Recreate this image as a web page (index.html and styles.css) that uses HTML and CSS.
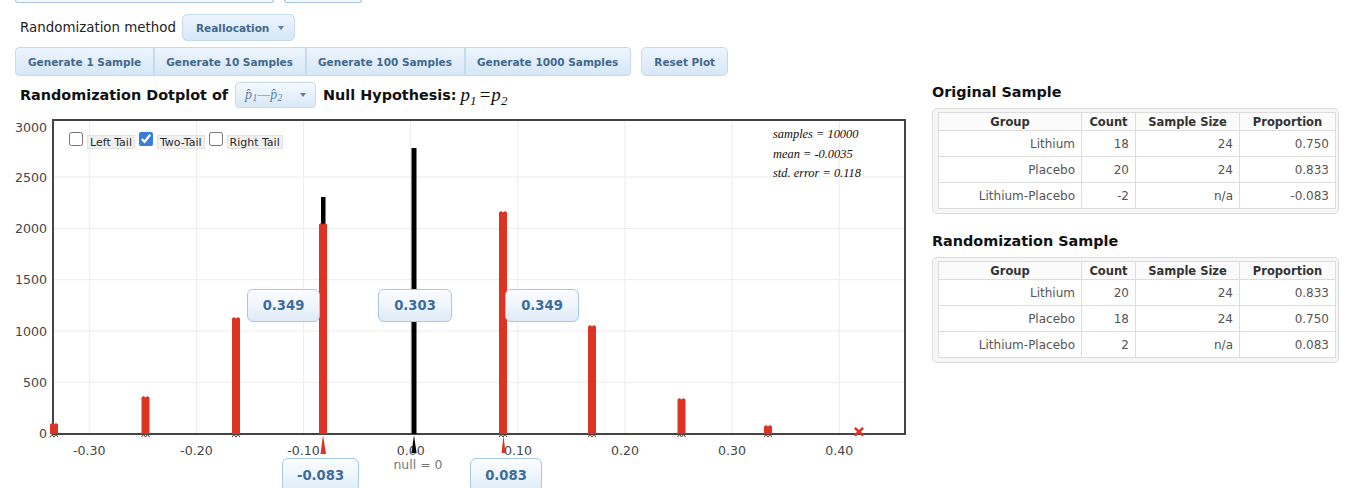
FILE: index.html
```html
<!DOCTYPE html>
<html>
<head>
<meta charset="utf-8">
<link rel="stylesheet" href="styles.css">
</head>
<body>
<div class="page">
  <div class="left">
    <div class="stub-row"><div class="stub stub-a"></div><div class="stub stub-b"></div></div>
    <div class="method-row">
      <span class="method-label">Randomization method</span>
      <button class="btn select-btn">Reallocation<span class="caret"></span></button>
    </div>
    <div class="btn-row">
      <div class="btnset">
        <button class="btn">Generate 1 Sample</button>
        <button class="btn">Generate 10 Samples</button>
        <button class="btn">Generate 100 Samples</button>
        <button class="btn">Generate 1000 Samples</button>
      </div>
      <button class="btn single">Reset Plot</button>
    </div>
    <div class="title-row">
      <span class="title">Randomization Dotplot of</span>
      <button class="stat-select"><span class="math">p̂<sub>1</sub>—p̂<sub>2</sub></span><span class="caret"></span></button>
      <span class="title">Null Hypothesis:</span>
      <span class="hyp">p<sub>1</sub>=p<sub>2</sub></span>
    </div>
    <div class="plot">
      <svg class="chart" width="915" height="372" viewBox="0 116 915 372" xmlns="http://www.w3.org/2000/svg">
        <g stroke="#ececec" stroke-width="1">
          <line x1="54" y1="177" x2="904" y2="177"/>
          <line x1="54" y1="228.4" x2="904" y2="228.4"/>
          <line x1="54" y1="279.7" x2="904" y2="279.7"/>
          <line x1="54" y1="331" x2="904" y2="331"/>
          <line x1="54" y1="382.4" x2="904" y2="382.4"/>
          <line x1="89.3" y1="121" x2="89.3" y2="433"/>
          <line x1="196.4" y1="121" x2="196.4" y2="433"/>
          <line x1="303.6" y1="121" x2="303.6" y2="433"/>
          <line x1="410.7" y1="121" x2="410.7" y2="433"/>
          <line x1="517.9" y1="121" x2="517.9" y2="433"/>
          <line x1="625" y1="121" x2="625" y2="433"/>
          <line x1="732.1" y1="121" x2="732.1" y2="433"/>
          <line x1="839.3" y1="121" x2="839.3" y2="433"/>
        </g>
        <rect x="53" y="120" width="852" height="314" fill="none" stroke="#444" stroke-width="2"/>
        <g class="ylab" text-anchor="end">
          <text x="47" y="127">3000</text>
          <text x="47" y="177">2500</text>
          <text x="47" y="228.4">2000</text>
          <text x="47" y="279.7">1500</text>
          <text x="47" y="331">1000</text>
          <text x="47" y="382.4">500</text>
          <text x="47" y="433">0</text>
        </g>
        <g class="xlab" text-anchor="middle">
          <text x="89.3" y="450">-0.30</text>
          <text x="196.4" y="450">-0.20</text>
          <text x="303.6" y="450">-0.10</text>
          <text x="410.7" y="450">0.00</text>
          <text x="517.9" y="450">0.10</text>
          <text x="625" y="450">0.20</text>
          <text x="732.1" y="450">0.30</text>
          <text x="839.3" y="450">0.40</text>
        </g>
        <text class="nulllab" x="418" y="464" text-anchor="middle">null = 0</text>
        <rect x="321" y="197" width="4.5" height="237" fill="#000"/>
        <rect x="411.5" y="148" width="5" height="286" fill="#000"/>
        <g fill="#dc3322">
          <path d="M50 424.5 l2 -1.5 l2 1.5 l2 -1.5 l2 1.5 V434 H50 Z"/>
          <path d="M141.5 397.5 l2 -1.5 l2 1.5 l2 -1.5 l2 1.5 V434 H141.5 Z"/>
          <path d="M232 318.5 l2 -1.5 l2 1.5 l2 -1.5 l2 1.5 V434 H232 Z"/>
          <path d="M319 224.5 l2 -1.5 l2 1.5 l2 -1.5 l2 1.5 V434 H319 Z"/>
          <path d="M499 212.5 l2 -1.5 l2 1.5 l2 -1.5 l2 1.5 V434 H499 Z"/>
          <path d="M588 326.5 l2 -1.5 l2 1.5 l2 -1.5 l2 1.5 V434 H588 Z"/>
          <path d="M677.5 399.5 l2 -1.5 l2 1.5 l2 -1.5 l2 1.5 V434 H677.5 Z"/>
          <path d="M764 426.5 l2 -1.5 l2 1.5 l2 -1.5 l2 1.5 V434 H764 Z"/>
        </g>
        <g stroke="#dc3322" stroke-width="2.4" stroke-linecap="round">
          <line x1="855.5" y1="428.5" x2="862.5" y2="435"/>
          <line x1="862.5" y1="428.5" x2="855.5" y2="435"/>
        </g>
        <g stroke="#5a2a22" stroke-width="1" fill="none">
          <path d="M50 437 l2 -2.5 l2 2.5 l2 -2.5 l2 2.5"/>
          <path d="M141.5 437 l2 -2.5 l2 2.5 l2 -2.5 l2 2.5"/>
          <path d="M232 437 l2 -2.5 l2 2.5 l2 -2.5 l2 2.5"/>
          <path d="M499 437 l2 -2.5 l2 2.5 l2 -2.5 l2 2.5"/>
          <path d="M588 437 l2 -2.5 l2 2.5 l2 -2.5 l2 2.5"/>
          <path d="M677.5 437 l2 -2.5 l2 2.5 l2 -2.5 l2 2.5"/>
          <path d="M764 437 l2 -2.5 l2 2.5 l2 -2.5 l2 2.5"/>
        </g>
        <polygon points="323,435 320.5,454 326,454" fill="#dc3322"/>
        <polygon points="503.5,435 501.5,453 505.5,453" fill="#dc3322"/>
        <polygon points="414,435 411.5,453 416.5,453" fill="#000"/>
      </svg>

      <div class="tails">
        <input type="checkbox" class="cb"><span class="tail-label">Left Tail</span>
        <input type="checkbox" class="cb" checked><span class="tail-label">Two-Tail</span>
        <input type="checkbox" class="cb"><span class="tail-label">Right Tail</span>
      </div>

      <div class="stats">
        <div>samples = 10000</div>
        <div>mean = -0.0035</div>
        <div>std. error = 0.118</div>
      </div>

      <div class="pbox v1">0.349</div>
      <div class="pbox v2">0.303</div>
      <div class="pbox v3">0.349</div>
      <div class="pbox v4">-0.083</div>
      <div class="pbox v5">0.083</div>
    </div>
  </div>

  <div class="right">
    <div class="sec-title first">Original Sample</div>
    <div class="panel">
      <table class="tbl">
        <tr><th class="c1">Group</th><th class="c2">Count</th><th class="c3">Sample Size</th><th class="c4">Proportion</th></tr>
        <tr><td>Lithium</td><td>18</td><td>24</td><td>0.750</td></tr>
        <tr><td>Placebo</td><td>20</td><td>24</td><td>0.833</td></tr>
        <tr><td>Lithium-Placebo</td><td>-2</td><td>n/a</td><td>-0.083</td></tr>
      </table>
    </div>
    <div class="sec-title second">Randomization Sample</div>
    <div class="panel">
      <table class="tbl">
        <tr><th class="c1">Group</th><th class="c2">Count</th><th class="c3">Sample Size</th><th class="c4">Proportion</th></tr>
        <tr><td>Lithium</td><td>20</td><td>24</td><td>0.833</td></tr>
        <tr><td>Placebo</td><td>18</td><td>24</td><td>0.750</td></tr>
        <tr><td>Lithium-Placebo</td><td>2</td><td>n/a</td><td>0.083</td></tr>
      </table>
    </div>
  </div>
</div>
</body>
</html>
```

FILE: styles.css
```css
* { box-sizing: border-box; }
html, body { margin: 0; padding: 0; background: #fff; }
body {
  font-family: "DejaVu Sans", Verdana, sans-serif;
  color: #222;
  width: 1363px;
  height: 488px;
  overflow: hidden;
}
.page { display: flex; }
.left { width: 925px; flex: none; }
.right { width: 420px; padding-left: 6px; flex: none; }

.stub-row { display: flex; height: 3px; }
.stub {
  height: 3px;
  border: 1px solid #a9c3dc;
  border-top: none;
  border-radius: 0 0 4px 4px;
  background: #f3f8fd;
}
.stub-a { margin-left: 15px; width: 259px; }
.stub-b { margin-left: 10px; width: 78px; }

.method-row {
  display: flex;
  align-items: center;
  gap: 6px;
  margin-top: 11px;
  padding-left: 20px;
  height: 27px;
}
.method-label { font-size: 13.4px; color: #222; }

.btn {
  font-family: "DejaVu Sans", Verdana, sans-serif;
  font-weight: bold;
  font-size: 10.5px;
  color: #41698f;
  height: 29px;
  padding: 0 12px;
  margin: 0;
  border: 1px solid #c5dbec;
  background: linear-gradient(#edf5fd 0%, #e2eefa 50%, #d6e7f7 100%);
  display: inline-flex;
  align-items: center;
  white-space: nowrap;
}
.select-btn {
  height: 27px;
  padding: 0 10px 0 13px;
  border-radius: 5px;
  gap: 9px;
}
.caret {
  display: inline-block;
  width: 0; height: 0;
  border-left: 3.5px solid transparent;
  border-right: 3.5px solid transparent;
  border-top: 4px solid #5b7fa6;
}

.btn-row {
  display: flex;
  gap: 10px;
  margin-top: 6px;
  padding-left: 15px;
}
.btnset { display: flex; }
.btnset .btn + .btn { border-left: none; }
.btnset .btn:first-child { border-radius: 4px 0 0 4px; }
.btnset .btn:last-child { border-radius: 0 4px 4px 0; }
.btnset .btn + .btn { box-shadow: inset 1px 0 0 #c5dbec; }
.single { border-radius: 5px; }

.title-row {
  display: flex;
  align-items: center;
  margin-top: 6px;
  padding-left: 20px;
  height: 26px;
}
.title { font-weight: bold; font-size: 14.4px; color: #111; }
.stat-select {
  margin: 0 7px 0 7px;
  height: 26px;
  width: 81px;
  border: 1px solid #c5dbec;
  border-radius: 4px;
  background: linear-gradient(#f4f9fe 0%, #e4effa 60%, #d9e8f6 100%);
  display: inline-flex;
  align-items: center;
  justify-content: space-between;
  padding: 0 9px 0 9px;
}
.math {
  font-family: "Liberation Serif", serif;
  font-style: italic;
  font-size: 14px;
  color: #5a82ac;
  letter-spacing: 0.3px;
}
.math sub { font-size: 9.5px; vertical-align: -2px; line-height: 0; }
.hyp {
  margin-left: 4px;
  font-family: "Liberation Serif", serif;
  font-style: italic;
  font-size: 19px;
  color: #111;
}
.hyp sub { font-size: 13px; vertical-align: -4px; line-height: 0; margin-right: 2px; }

.plot {
  position: relative;
  margin-top: 8px;
  width: 915px;
  height: 372px;
}
.chart { display: block; }
.ylab text, .xlab text {
  font-family: "DejaVu Sans", Verdana, sans-serif;
  font-size: 12.6px;
  fill: #444;
  dominant-baseline: central;
}
.nulllab {
  font-family: "DejaVu Sans", Verdana, sans-serif;
  font-size: 12.5px;
  fill: #777;
  dominant-baseline: central;
}

.tails {
  position: absolute;
  left: 69px;
  top: 16px;
  display: flex;
  align-items: flex-start;
}
.cb {
  width: 14px;
  height: 14px;
  margin: 0;
  accent-color: #3b7bdc;
}
.tail-label {
  margin: 3px 4px 0 4px;
  height: 14px;
  line-height: 13px;
  padding: 0 2px;
  font-size: 11px;
  color: #2a2a2a;
  background: #f0f0f0;
  border: 1px solid #e2e2e2;
}

.stats {
  position: absolute;
  left: 773px;
  top: 9px;
  font-family: "Liberation Serif", serif;
  font-style: italic;
  font-size: 12.4px;
  line-height: 19.5px;
  color: #111;
}

.pbox {
  position: absolute;
  height: 33px;
  border: 1px solid #a6c9e2;
  border-radius: 6px;
  background: linear-gradient(#fbfdff 0%, #eef5fc 50%, #dfebf7 100%);
  color: #3d6d9c;
  font-weight: bold;
  font-size: 13.2px;
  display: flex;
  align-items: center;
  justify-content: center;
}
.v1 { left: 247px; top: 173px; width: 73px; }
.v2 { left: 378px; top: 173px; width: 74px; }
.v3 { left: 505px; top: 173px; width: 74px; }
.v4 { left: 282px; top: 342px; width: 77px; height: 34px; }
.v5 { left: 470px; top: 342px; width: 72px; height: 34px; }

.sec-title {
  font-weight: bold;
  font-size: 14.4px;
  line-height: 20px;
  color: #111;
  padding-left: 1px;
}
.sec-title.first { margin-top: 82px; }
.sec-title.second { margin-top: 17px; }
.panel {
  margin-top: 6px;
  margin-left: 1px;
  width: 407px;
  border: 1px solid #dcdcdc;
  border-radius: 5px;
  background: #f6f6f6;
  padding: 3px 4px 4px 5px;
}
.tbl {
  width: 397px;
  border-collapse: collapse;
  background: #fff;
  table-layout: fixed;
}
.tbl th, .tbl td {
  border: 1px solid #dddddd;
  padding: 0 6px;
  white-space: nowrap;
}
.tbl th {
  height: 18px;
  font-weight: bold;
  font-size: 11.5px;
  color: #333;
  text-align: center;
  background: #fbfbfb;
}
.tbl td {
  height: 26px;
  font-size: 12px;
  color: #555;
  text-align: right;
}
.c1 { width: 143px; }
.c2 { width: 54px; }
.c3 { width: 104px; }
.c4 { width: 96px; }
```
